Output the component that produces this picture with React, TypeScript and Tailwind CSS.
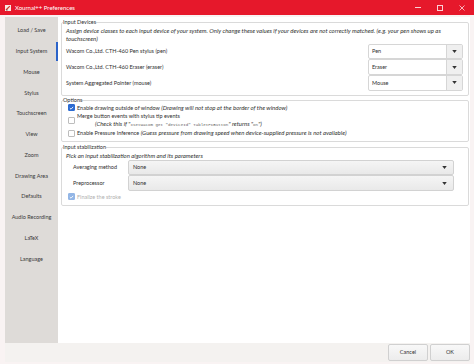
import React from 'react';

const pages = [
  'Load / Save',
  'Input System',
  'Mouse',
  'Stylus',
  'Touchscreen',
  'View',
  'Zoom',
  'Drawing Area',
  'Defaults',
  'Audio Recording',
  'LaTeX',
  'Language',
];

const devices = [
  { name: 'Wacom Co.,Ltd. CTH-460 Pen stylus (pen)', value: 'Pen' },
  { name: 'Wacom Co.,Ltd. CTH-460 Eraser (eraser)', value: 'Eraser' },
  { name: 'System Aggregated Pointer (mouse)', value: 'Mouse' },
];

const Arrow = () => (
  <svg viewBox="0 0 6 4" className="h-[3px] w-[5px]">
    <path d="M0 0h6L3 4z" fill="#333" />
  </svg>
);

const Check = ({ checked, disabled }: { checked?: boolean; disabled?: boolean }) => (
  <span
    className={`flex h-[7px] w-[7px] shrink-0 items-center justify-center rounded-[1px] border ${
      checked
        ? disabled
          ? 'border-[#93b6e6] bg-[#93b6e6]'
          : 'border-[#2d6cd2] bg-[#2d6cd2]'
        : 'border-[#bdbdbd] bg-white'
    }`}
  >
    {checked && (
      <svg viewBox="0 0 8 8" className="h-[6px] w-[6px]">
        <path d="M1.4 4.2 3.2 5.9 6.6 2.2" fill="none" stroke="white" strokeWidth="1.4" />
      </svg>
    )}
  </span>
);

const DeviceCombo = ({ value }: { value: string }) => (
  <div className="flex h-[15.7px] w-[95px] rounded-[2px] border border-[#d6d6d6] bg-white">
    <span className="flex flex-1 items-center pl-[3px]">{value}</span>
    <span className="flex w-[16px] items-center justify-center border-l border-[#d6d6d6] bg-[#efefef]">
      <Arrow />
    </span>
  </div>
);

const WideCombo = ({ value }: { value: string }) => (
  <div className="flex h-[15.5px] w-[326px] items-center rounded-[2px] border border-[#d2d2d2] bg-gradient-to-b from-[#f5f5f5] to-[#e9e9e9] pl-[4px] pr-[6px]">
    <span className="flex-1">{value}</span>
    <Arrow />
  </div>
);

const Mono = ({ children }: { children: React.ReactNode }) => (
  <span className="font-['Liberation_Mono',monospace] not-italic text-[4.2px] text-[#666]">{children}</span>
);

export default function App() {
  return (
    <div className="flex h-[364px] w-[474px] flex-col bg-[#f9f3f3] font-['Lato',sans-serif] text-[5.5px] text-[#2f2f2f]">
      {/* title bar */}
      <div className="flex h-[15px] shrink-0 items-center bg-[#e6182b] pl-[5px] text-white">
        <svg viewBox="0 0 6 6" className="h-[6px] w-[6px]">
          <rect width="6" height="6" fill="#f7e9e3" />
          <path d="M1 5 4.8 1.2" stroke="#d23a2a" strokeWidth="1.2" />
          <path d="M1 5h2" stroke="#555" strokeWidth="0.6" />
        </svg>
        <span className="ml-[4px] text-[6px]">Xournal++ Preferences</span>
        <div className="ml-auto flex pr-[1px]">
          <span className="flex h-[15px] w-[22px] items-center justify-center">
            <span className="h-px w-[6px] bg-white/80" />
          </span>
          <span className="flex h-[15px] w-[22px] items-center justify-center">
            <span className="h-[6px] w-[6px] border border-white/80" />
          </span>
          <span className="flex h-[15px] w-[22px] items-center justify-center">
            <svg viewBox="0 0 6 6" className="h-[6px] w-[6px]">
              <path d="M0.5 0.5 5.5 5.5M5.5 0.5 0.5 5.5" stroke="white" strokeOpacity="0.85" strokeWidth="0.8" />
            </svg>
          </span>
        </div>
      </div>

      <div className="flex flex-1 flex-col pb-[2px] pl-[5px] pr-[4px] pt-[2px]">
        <div className="flex flex-1">
          {/* sidebar */}
          <div className="w-[53px] bg-[#dedbd8] pt-[3px] text-[#3a3a3a]">
            {pages.map((p) => (
              <div key={p} className="relative flex h-[20.75px] items-center justify-center whitespace-nowrap">
                {p}
                {p === 'Input System' && (
                  <span className="absolute bottom-[1px] right-0 top-[1px] w-[2px] bg-[#2b63c9]" />
                )}
              </div>
            ))}
          </div>

          {/* content */}
          <div className="flex-1 bg-white pl-[3px] pr-[1px] pt-[2px]">
            <fieldset className="rounded-[2px] border border-[#dadada] pb-[4px]">
              <legend className="ml-[1px] leading-[7px]">Input Devices</legend>
              <div className="pl-[4px] pt-[1px] text-[6px] italic leading-[8px] whitespace-nowrap">
                Assign device classes to each input device of your system. Only change these values if your devices are not correctly matched. (e.g. your pen shows up as
                <br />
                touchscreen)
              </div>
              <div className="flex flex-col pl-[4px] pr-[5px] pt-[0.5px]">
                {devices.map((d) => (
                  <div key={d.name} className="flex items-center justify-between">
                    <span>{d.name}</span>
                    <DeviceCombo value={d.value} />
                  </div>
                ))}
              </div>
            </fieldset>

            <fieldset className="mt-[1px] rounded-[2px] border border-[#dadada] pb-[3px]">
              <legend className="ml-[1px] leading-[7px]">Options</legend>
              <div className="flex flex-col pl-[6px] leading-[8.3px] whitespace-nowrap">
                <div className="flex items-center gap-[2px]">
                  <Check checked />
                  <span>
                    Enable drawing outside of window <i className="text-[6px]">(Drawing will not stop at the border of the window)</i>
                  </span>
                </div>
                <div className="flex items-center gap-[2px]">
                  <Check />
                  <div>
                    <div>Merge button events with stylus tip events</div>
                    <div className="pl-[18px] text-[6px] italic">
                      (Check this if "<Mono>xsetwacom get "deviceId" TabletPCButton</Mono>" returns "<Mono>on</Mono>")
                    </div>
                  </div>
                </div>
                <div className="flex items-center gap-[2px]">
                  <Check />
                  <span>
                    Enable Pressure Inference <i className="text-[6px]">(Guess pressure from drawing speed when device-supplied pressure is not available)</i>
                  </span>
                </div>
              </div>
            </fieldset>

            <fieldset className="mt-[2px] rounded-[2px] border border-[#dadada] pb-[4px]">
              <legend className="ml-[1px] leading-[7px]">Input stabilization</legend>
              <div className="pl-[4px] pt-[1px] text-[6px] italic leading-[8px]">
                Pick an input stabilization algorithm and its parameters
              </div>
              <div className="grid grid-cols-[55px_auto] items-center pl-[11px]">
                <span>Averaging method</span>
                <WideCombo value="None" />
                <span>Preprocessor</span>
                <WideCombo value="None" />
              </div>
              <div className="flex items-center gap-[2px] pl-[6px] pt-[2px] leading-[8px] text-[#b0b0b0]">
                <Check checked disabled />
                <span>Finalize the stroke</span>
              </div>
            </fieldset>
          </div>
        </div>

        {/* button bar */}
        <div className="flex h-[19px] items-center justify-end gap-[2px] bg-[#f4f2f0]">
          <button className="h-[17px] w-[40px] rounded-[2px] border border-[#d0d0d0] bg-gradient-to-b from-[#f8f8f8] to-[#ececec] text-[#333]">
            Cancel
          </button>
          <button className="h-[17px] w-[40px] rounded-[2px] border border-[#d0d0d0] bg-gradient-to-b from-[#f8f8f8] to-[#ececec] text-[#333]">
            OK
          </button>
        </div>
      </div>
    </div>
  );
}
